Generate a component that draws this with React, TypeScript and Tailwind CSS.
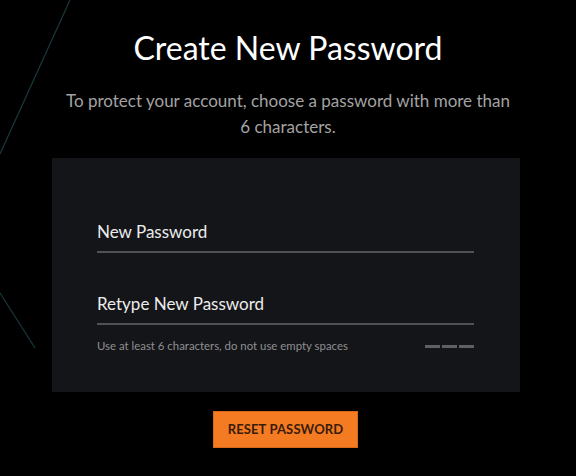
import { useState } from 'react';

const Field = ({ label, value, onChange }: { label: string; value: string; onChange: (v: string) => void }) => (
    <label className="block">
        <input
            type="password"
            placeholder={label}
            value={value}
            onChange={e => onChange(e.target.value)}
            className="w-full bg-transparent outline-none text-[17px] leading-[24px] text-[#ececec] placeholder:text-[#ececec] pb-[7px] border-b-2 border-[#505154]"
        />
    </label>
);

export default function App() {
    const [pass, setPass] = useState('');
    const [retype, setRetype] = useState('');

    return (
        <div className="relative min-h-[476px] bg-black overflow-hidden font-['Lato','Noto_Sans',sans-serif]">
            {/* background strokes */}
            <svg className="absolute inset-0 pointer-events-none" width="576" height="476">
                <line x1="70" y1="0" x2="0" y2="154" stroke="#17393a" strokeWidth="1.2" />
                <line x1="0" y1="293" x2="35" y2="348" stroke="#17393a" strokeWidth="1.2" />
            </svg>

            <div className="relative flex flex-col items-center pt-[26px]">
                <h1 className="text-[32px] leading-[44px] text-white">Create New Password</h1>
                <p className="mt-[18px] max-w-[452px] text-center text-[17px] leading-[26px] text-[#a3a3a3]">
                    To protect your account, choose a password with more than 6 characters.
                </p>

                <div className="mt-[18px] self-start ml-[52px] w-[468px] bg-[#141518] pl-[45px] pr-[46px] pt-[62px] pb-[38px]">
                    <Field label="New Password" value={pass} onChange={setPass} />
                    <div className="mt-[39px]">
                        <Field label="Retype New Password" value={retype} onChange={setRetype} />
                    </div>
                    <div className="mt-[13px] flex items-center justify-between">
                        <span className="text-[11.4px] leading-[16px] text-[#8f8f92]">Use at least 6 characters, do not use empty spaces</span>
                        <div className="flex gap-[2px]">
                            <div className="w-[15px] h-[3px] bg-[#5f6063]" />
                            <div className="w-[15px] h-[3px] bg-[#5f6063]" />
                            <div className="w-[15px] h-[3px] bg-[#5f6063]" />
                        </div>
                    </div>
                </div>

                <button className="mt-[19px] self-start ml-[213px] w-[145px] h-[37px] bg-[#f47b22] border border-[#d9681a] text-[#3b1c08] text-[13px] font-bold uppercase tracking-[0.01em]">
                    Reset Password
                </button>
            </div>
        </div>
    );
}
